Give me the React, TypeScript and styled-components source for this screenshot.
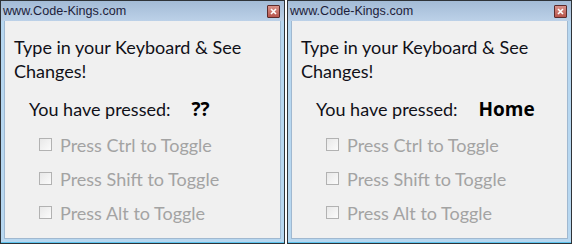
import React from 'react';
import styled, { createGlobalStyle } from 'styled-components';

const Global = createGlobalStyle`
  html, body { margin: 0; padding: 0; background: #ffffff; }
  body { width: 572px; height: 244px; overflow: hidden; }
`;

const Desk = styled.div`
  display: flex;
  gap: 2px;
  width: 572px;
  height: 244px;
`;

const Window = styled.div`
  box-sizing: border-box;
  width: 285px;
  height: 244px;
  border: 1px solid #2e3338;
  display: flex;
  flex-direction: column;
  background: #b9d1ea;
`;

const TitleBar = styled.div`
  height: 20px;
  display: flex;
  align-items: center;
  justify-content: space-between;
  padding: 0 4px 0 2px;
  background: linear-gradient(#a3bbd6, #bcd1e8);
  font-family: Tahoma, 'Liberation Sans', sans-serif;
  font-size: 12.6px;
  color: #1d1d3a;
`;

const CloseBtn = styled.div`
  box-sizing: border-box;
  width: 13px;
  height: 13px;
  border: 1px solid #5c2b2b;
  background: linear-gradient(#d9928a, #b8554c);
  display: flex;
  align-items: center;
  justify-content: center;
  border-radius: 1px;
`;

const Frame = styled.div`
  flex: 1;
  display: flex;
  padding: 0 3px 3px 3px;
  background: #b7d7f0;
  border-bottom: 1px solid #5ec4ee;
`;

const Body = styled.div`
  flex: 1;
  box-sizing: border-box;
  border: 1px solid #a0b8d0;
  border-top: none;
  background: #f0f0f0;
  padding: 14px 0 0 9px;
  font-family: 'Lato', 'Open Sans', sans-serif;
`;

const Heading = styled.div`
  font-size: 18px;
  line-height: 24px;
  color: #101018;
  width: 250px;
`;

const PressedRow = styled.div`
  display: flex;
  align-items: baseline;
  margin: 13px 0 0 15px;
  font-size: 18px;
  color: #101018;
`;

const KeyName = styled.span`
  margin-left: 21px;
  font-family: 'Open Sans', 'Lato', sans-serif;
  font-weight: 700;
  color: #000;
  font-size: 19px;
`;

const Options = styled.div`
  display: flex;
  flex-direction: column;
  gap: 11px;
  margin: 11px 0 0 25px;
`;

const Option = styled.label`
  display: flex;
  align-items: center;
  gap: 8px;
  height: 23px;
  font-size: 18px;
  color: #a3a3a3;
`;

const Box = styled.span`
  box-sizing: border-box;
  width: 13px;
  height: 13px;
  border: 1px solid #b2b2b2;
  background: linear-gradient(135deg, #e8e8e8, #fbfbfb);
`;

function KeyWindow({ pressed }: { pressed: string }) {
  return (
    <Window>
      <TitleBar>
        <span>www.Code-Kings.com</span>
        <CloseBtn>
          <svg width="7" height="7" viewBox="0 0 7 7">
            <path d="M1 1 L6 6 M6 1 L1 6" stroke="#ffffff" strokeWidth="1.6" />
          </svg>
        </CloseBtn>
      </TitleBar>
      <Frame>
        <Body>
          <Heading>Type in your Keyboard &amp; See Changes!</Heading>
          <PressedRow>
            You have pressed:
            <KeyName>{pressed}</KeyName>
          </PressedRow>
          <Options>
            <Option><Box />Press Ctrl to Toggle</Option>
            <Option><Box />Press Shift to Toggle</Option>
            <Option><Box />Press Alt to Toggle</Option>
          </Options>
        </Body>
      </Frame>
    </Window>
  );
}

export default function App() {
  return (
    <>
      <Global />
      <Desk>
        <KeyWindow pressed="??" />
        <KeyWindow pressed="Home" />
      </Desk>
    </>
  );
}
